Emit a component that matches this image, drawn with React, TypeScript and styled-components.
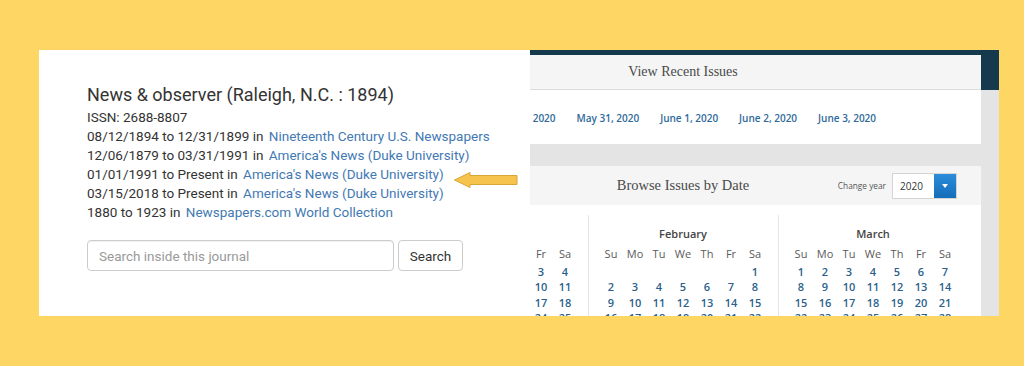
import styled, { createGlobalStyle } from "styled-components";

const GlobalStyle = createGlobalStyle`
  html, body {
    margin: 0;
    padding: 0;
  }
  body {
    background: #fdd663;
    width: 1024px;
    height: 366px;
    overflow: hidden;
  }
`;

const holdings = [
  { range: "08/12/1894 to 12/31/1899", source: "Nineteenth Century U.S. Newspapers" },
  { range: "12/06/1879 to 03/31/1991", source: "America's News (Duke University)" },
  { range: "01/01/1991 to Present", source: "America's News (Duke University)", marked: true },
  { range: "03/15/2018 to Present", source: "America's News (Duke University)" },
  { range: "1880 to 1923", source: "Newspapers.com World Collection" },
];

const recentIssues = ["May 30, 2020", "May 31, 2020", "June 1, 2020", "June 2, 2020", "June 3, 2020"];

const months = [
  { name: "January", offset: 3, days: 31 },
  { name: "February", offset: 6, days: 29 },
  { name: "March", offset: 0, days: 31 },
];

const weekDays = ["Su", "Mo", "Tu", "We", "Th", "Fr", "Sa"];

function Arrow() {
  return (
    <ArrowIcon width="66" height="18" viewBox="0 0 66 18">
      <path
        d="M1.5 9 L17 1.5 L17 4.5 L64 4.5 L64 13.5 L17 13.5 L17 16.5 Z"
        fill="#f6c44c"
        stroke="#d8a636"
        strokeWidth="1"
        strokeLinejoin="round"
      />
    </ArrowIcon>
  );
}

function Month({ name, offset, days }: { name: string; offset: number; days: number }) {
  const cells: (number | null)[] = [];
  for (let i = 0; i < offset; i++) cells.push(null);
  for (let d = 1; d <= days; d++) cells.push(d);

  return (
    <MonthBlock>
      <MonthName>{name}</MonthName>
      <DayGrid>
        {weekDays.map((w) => (
          <WeekDay key={w}>{w}</WeekDay>
        ))}
        {cells.map((d, i) => (
          <DayCell key={i}>{d}</DayCell>
        ))}
      </DayGrid>
    </MonthBlock>
  );
}

export default function App() {
  return (
    <>
      <GlobalStyle />
      <Page>
        <JournalPanel>
          <Title>News &amp; observer (Raleigh, N.C. : 1894)</Title>
          <Line>ISSN: 2688-8807</Line>
          {holdings.map((h, i) => (
            <Line key={i}>
              {h.range} in <Link>{h.source}</Link>
              {h.marked ? <Arrow /> : null}
            </Line>
          ))}
          <SearchRow>
            <SearchInput placeholder="Search inside this journal" />
            <SearchButton>Search</SearchButton>
          </SearchRow>
        </JournalPanel>

        <Shot>
          <NavyBar>
            <Viewport>
              <RecentHeader>View Recent Issues</RecentHeader>
            </Viewport>
          </NavyBar>
          <ShotBody>
            <Viewport>
              <RecentList>
                {recentIssues.map((d) => (
                  <RecentLink key={d}>{d}</RecentLink>
                ))}
              </RecentList>
              <BrowseHeader>
                <span />
                <BrowseTitle>Browse Issues by Date</BrowseTitle>
                <YearControl>
                  <YearLabel>Change year</YearLabel>
                  <YearSelect>
                    <YearValue>2020</YearValue>
                    <YearButton>
                      <svg width="6" height="4" viewBox="0 0 6 4">
                        <path d="M0 0 L6 0 L3 4 Z" fill="#fff" />
                      </svg>
                    </YearButton>
                  </YearSelect>
                </YearControl>
              </BrowseHeader>
              <Calendar>
                {months.map((m) => (
                  <Month key={m.name} {...m} />
                ))}
              </Calendar>
            </Viewport>
          </ShotBody>
        </Shot>
      </Page>
    </>
  );
}

const Page = styled.div`
  display: flex;
  padding: 50px 0 0 39px;
  height: 366px;
  box-sizing: border-box;
`;

const JournalPanel = styled.div`
  width: 491px;
  height: 266px;
  box-sizing: border-box;
  background: #fff;
  padding: 34px 0 0 48px;
  font-family: Roboto, "Liberation Sans", sans-serif;
  color: #333;
`;

const Title = styled.h1`
  margin: 0 0 2px;
  font-size: 18px;
  font-weight: 400;
  line-height: 22px;
  color: #333;
`;

const Line = styled.div`
  font-size: 13.5px;
  line-height: 19px;
  white-space: nowrap;
`;

const Link = styled.a`
  color: #4379b3;
  margin-left: 2px;
  cursor: pointer;
`;

const ArrowIcon = styled.svg`
  margin: -6px 0 -6px 9px;
  vertical-align: -4px;
`;

const SearchRow = styled.div`
  display: flex;
  gap: 4px;
  margin-top: 18px;
`;

const SearchInput = styled.input`
  width: 307px;
  height: 31px;
  box-sizing: border-box;
  border: 1px solid #ccc;
  border-radius: 4px;
  padding: 0 11px;
  font-family: Roboto, "Liberation Sans", sans-serif;
  font-size: 13.5px;
  color: #333;
  box-shadow: inset 0 1px 1px rgba(0, 0, 0, 0.06);

  &::placeholder {
    color: #9a9a9a;
  }
`;

const SearchButton = styled.button`
  width: 65px;
  height: 31px;
  border: 1px solid #ccc;
  border-radius: 4px;
  background: #fff;
  font-family: Roboto, "Liberation Sans", sans-serif;
  font-size: 13.5px;
  color: #333;
  padding: 0;
`;

const Shot = styled.div`
  width: 469px;
  height: 266px;
  overflow: hidden;
  background: #e4e4e4;
  display: flex;
  flex-direction: column;
`;

const NavyBar = styled.div`
  background: #15394d;
  padding-top: 5px;
`;

const ShotBody = styled.div`
  flex: 1;
`;

const Viewport = styled.div`
  width: 596px;
  margin-left: -145px;
`;

const RecentHeader = styled.div`
  height: 35px;
  box-sizing: border-box;
  background: #f5f5f5;
  border-bottom: 1px solid #dcdcdc;
  display: flex;
  align-items: center;
  justify-content: center;
  font-family: "Liberation Serif", serif;
  font-size: 14px;
  color: #4a4a4a;
`;

const RecentList = styled.div`
  height: 54px;
  background: #fff;
  display: flex;
  align-items: center;
  justify-content: center;
  gap: 21px;
  padding: 1px 0 0 3px;
  box-sizing: border-box;
`;

const RecentLink = styled.a`
  font-family: "Open Sans", sans-serif;
  font-size: 10px;
  font-weight: 600;
  color: #2f6a9b;
  white-space: nowrap;
`;

const BrowseHeader = styled.div`
  margin-top: 22px;
  height: 39px;
  background: #f5f5f5;
  display: grid;
  grid-template-columns: 1fr auto 1fr;
  align-items: center;
  padding: 0 24px;
  box-sizing: border-box;
`;

const BrowseTitle = styled.div`
  font-family: "Liberation Serif", serif;
  font-size: 14.5px;
  color: #4a4a4a;
`;

const YearControl = styled.div`
  display: flex;
  align-items: center;
  justify-content: flex-end;
  gap: 6px;
`;

const YearLabel = styled.span`
  font-family: "Open Sans", sans-serif;
  font-size: 8.3px;
  color: #555;
`;

const YearSelect = styled.div`
  width: 65px;
  height: 26px;
  box-sizing: border-box;
  border: 1px solid #d5d5d5;
  background: #fff;
  display: flex;
`;

const YearValue = styled.span`
  flex: 1;
  display: flex;
  align-items: center;
  padding-left: 7px;
  font-family: "Open Sans", sans-serif;
  font-size: 10px;
  color: #333;
`;

const YearButton = styled.span`
  width: 22px;
  background: linear-gradient(#2b8ddb, #146db8);
  display: flex;
  align-items: center;
  justify-content: center;
`;

const Calendar = styled.div`
  background: #fff;
  height: 140px;
  display: flex;
  justify-content: center;
  padding-top: 10px;
  box-sizing: border-box;
`;

const MonthBlock = styled.div`
  width: 190px;
  box-sizing: border-box;
  padding: 11px 11px 0;

  & + & {
    border-left: 1px solid #e6e6e6;
    padding-left: 10px;
  }
`;

const MonthName = styled.div`
  text-align: center;
  font-family: "Open Sans", sans-serif;
  font-size: 11px;
  font-weight: 600;
  line-height: 16px;
  color: #444;
  margin-bottom: 2px;
`;

const DayGrid = styled.div`
  display: grid;
  grid-template-columns: repeat(7, 24px);
  font-family: "Open Sans", sans-serif;
  text-align: center;
`;

const WeekDay = styled.div`
  font-size: 11px;
  line-height: 19.5px;
  color: #5a5a5a;
`;

const DayCell = styled.div`
  font-size: 11px;
  font-weight: 600;
  line-height: 15.5px;
  color: #2c5f8c;
`;
